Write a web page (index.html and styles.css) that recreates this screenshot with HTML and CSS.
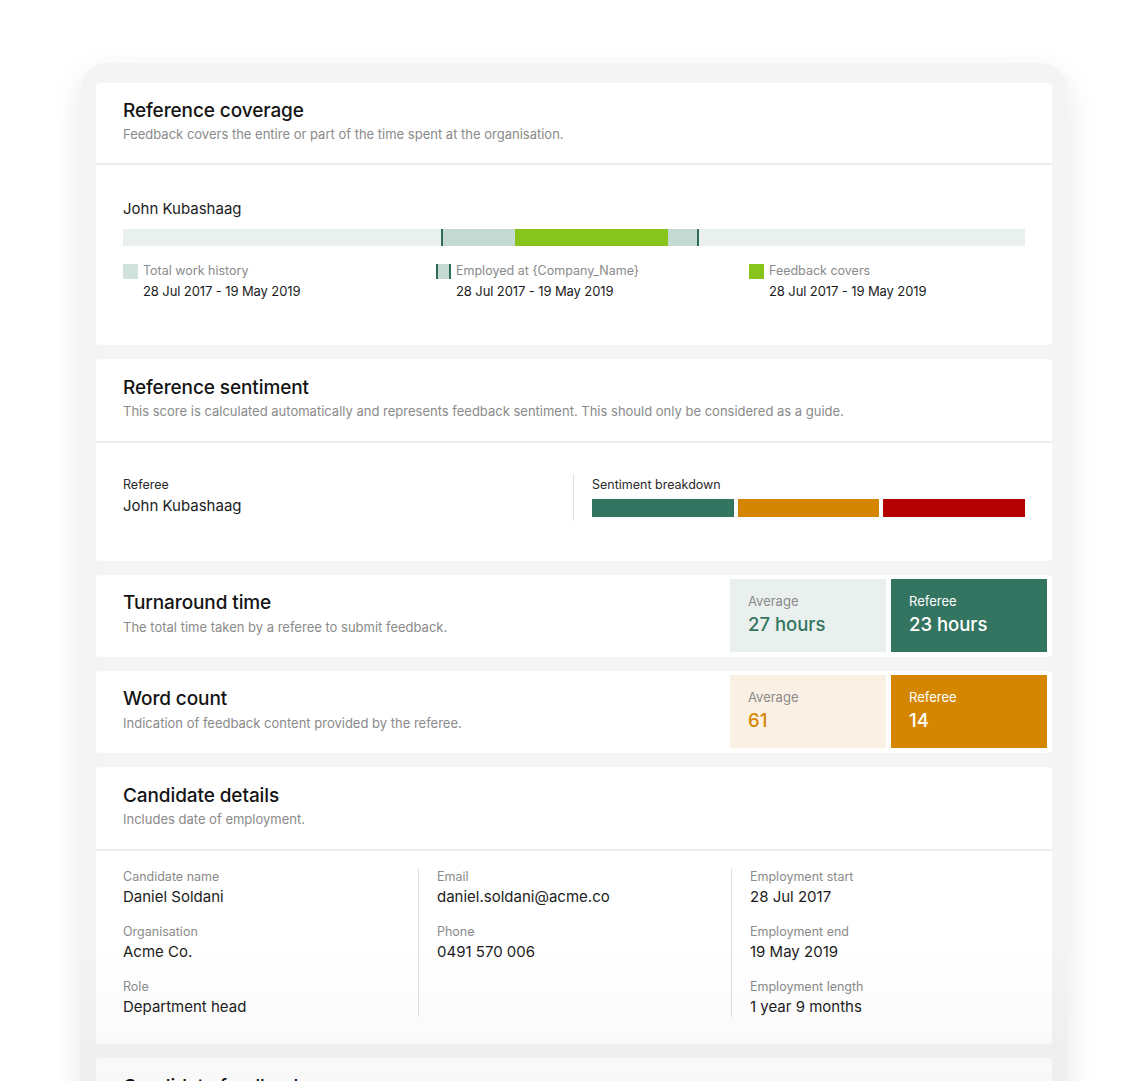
FILE: index.html
```html
<!DOCTYPE html>
<html lang="en">
<head>
<meta charset="utf-8">
<title>Reference report</title>
<link rel="stylesheet" href="styles.css">
</head>
<body>
<div class="frame">
  <section class="card">
    <div class="card-head card-head-first">
      <h2 class="title">Reference coverage</h2>
      <p class="subtitle">Feedback covers the entire or part of the time spent at the organisation.</p>
    </div>
    <div class="coverage-body">
      <div class="name">John Kubashaag</div>
      <div class="track">
        <span class="seg" style="width:35.29%"></span>
        <span class="seg tick"></span>
        <span class="seg employed" style="width:7.99%"></span>
        <span class="seg feedback" style="width:16.87%"></span>
        <span class="seg employed" style="width:3.22%"></span>
        <span class="seg tick"></span>
      </div>
      <div class="cols legend">
        <div class="col">
          <div class="legend-label"><span class="swatch sw-total"></span>Total work history</div>
          <div class="legend-date">28 Jul 2017 - 19 May 2019</div>
        </div>
        <div class="col">
          <div class="legend-label"><span class="swatch sw-employed"></span>Employed at {Company_Name}</div>
          <div class="legend-date">28 Jul 2017 - 19 May 2019</div>
        </div>
        <div class="col">
          <div class="legend-label"><span class="swatch sw-feedback"></span>Feedback covers</div>
          <div class="legend-date">28 Jul 2017 - 19 May 2019</div>
        </div>
      </div>
    </div>
  </section>

  <section class="card">
    <div class="card-head">
      <h2 class="title">Reference sentiment</h2>
      <p class="subtitle">This score is calculated automatically and represents feedback sentiment. This should only be considered as a guide.</p>
    </div>
    <div class="sentiment-body">
      <div class="sent-left">
        <div class="dark-label">Referee</div>
        <div class="name">John Kubashaag</div>
      </div>
      <div class="sent-right">
        <div class="dark-label">Sentiment breakdown</div>
        <div class="sent-bars">
          <span class="sbar s-pos"></span>
          <span class="sbar s-neu"></span>
          <span class="sbar s-neg"></span>
        </div>
      </div>
    </div>
  </section>

  <section class="card stat-card">
    <div class="stat-text">
      <h2 class="title">Turnaround time</h2>
      <p class="subtitle">The total time taken by a referee to submit feedback.</p>
    </div>
    <div class="stat-boxes">
      <div class="box box-green-light">
        <div class="box-label">Average</div>
        <div class="box-value">27 hours</div>
      </div>
      <div class="box box-green">
        <div class="box-label">Referee</div>
        <div class="box-value">23 hours</div>
      </div>
    </div>
  </section>

  <section class="card stat-card">
    <div class="stat-text">
      <h2 class="title">Word count</h2>
      <p class="subtitle">Indication of feedback content provided by the referee.</p>
    </div>
    <div class="stat-boxes">
      <div class="box box-orange-light">
        <div class="box-label">Average</div>
        <div class="box-value">61</div>
      </div>
      <div class="box box-orange">
        <div class="box-label">Referee</div>
        <div class="box-value">14</div>
      </div>
    </div>
  </section>

  <section class="card">
    <div class="card-head">
      <h2 class="title">Candidate details</h2>
      <p class="subtitle">Includes date of employment.</p>
    </div>
    <div class="cols details">
      <div class="col">
        <div class="field"><div class="field-label">Candidate name</div><div class="field-value">Daniel Soldani</div></div>
        <div class="field"><div class="field-label">Organisation</div><div class="field-value">Acme Co.</div></div>
        <div class="field"><div class="field-label">Role</div><div class="field-value">Department head</div></div>
      </div>
      <div class="col divided">
        <div class="field"><div class="field-label">Email</div><div class="field-value">daniel.soldani@acme.co</div></div>
        <div class="field"><div class="field-label">Phone</div><div class="field-value">0491 570 006</div></div>
      </div>
      <div class="col divided">
        <div class="field"><div class="field-label">Employment start</div><div class="field-value">28 Jul 2017</div></div>
        <div class="field"><div class="field-label">Employment end</div><div class="field-value">19 May 2019</div></div>
        <div class="field"><div class="field-label">Employment length</div><div class="field-value">1 year 9 months</div></div>
      </div>
    </div>
  </section>

  <section class="card">
    <div class="card-head">
      <h2 class="title">Candidate feedback</h2>
      <p class="subtitle">Responses provided by the referee.</p>
    </div>
  </section>

  <div class="fade"></div>
</div>
</body>
</html>
```

FILE: styles.css
```css
* { box-sizing: border-box; }

html, body {
  margin: 0;
  padding: 0;
  background: #ffffff;
  height: 1081px;
  overflow: hidden;
}

body {
  font-family: "Inter", "Liberation Sans", sans-serif;
  color: #1c1c1c;
}

.frame {
  position: relative;
  width: 988px;
  margin: 63px auto 0;
  padding: 20px 16px 40px;
  background: #f4f4f4;
  border-radius: 28px;
  box-shadow: 0 10px 32px rgba(0, 0, 0, 0.09);
  display: flex;
  flex-direction: column;
  gap: 14px;
}

.card {
  background: #ffffff;
  border-radius: 4px;
}

.card-head {
  padding: 17px 27px 20px;
  border-bottom: 2px solid #ececec;
}

.card-head-first {
  padding-top: 16px;
  padding-bottom: 19px;
}

.title {
  margin: 0;
  font-size: 19px;
  line-height: 24px;
  font-weight: 500;
  letter-spacing: -0.1px;
  color: #141414;
}

.subtitle {
  margin: 1px 0 0;
  font-size: 13px;
  line-height: 20px;
  color: #8a8a8a;
}

.name {
  font-size: 15px;
  line-height: 20px;
  color: #1c1c1c;
}

/* coverage */
.coverage-body {
  padding: 34px 27px 44px;
}

.track {
  display: flex;
  height: 17px;
  margin-top: 10px;
  background: #e9f0ee;
}

.seg { display: block; height: 100%; }
.seg.tick { width: 2px; background: #2f6c58; }
.seg.employed { background: #c5d9d3; }
.seg.feedback { background: #87c41c; }

.cols {
  display: grid;
  grid-template-columns: 277px 295px 293px;
  column-gap: 18px;
}

.cols .col + .col {
  padding-left: 18px;
}

.legend { margin-top: 17px; }

.legend-label {
  display: flex;
  align-items: center;
  font-size: 12.5px;
  line-height: 16px;
  color: #8a8a8a;
}

.swatch {
  display: inline-block;
  width: 15px;
  height: 15px;
  margin-right: 5px;
  flex: none;
}

.sw-total { background: #d1e2dc; }
.sw-employed { background: #c5d9d3; border-left: 2px solid #2f6c58; border-right: 2px solid #2f6c58; }
.sw-feedback { background: #87c41c; }

.legend-date {
  margin-top: 2px;
  padding-left: 20px;
  font-size: 13px;
  line-height: 20px;
  letter-spacing: -0.1px;
  color: #1c1c1c;
}

/* sentiment */
.sentiment-body {
  display: grid;
  grid-template-columns: 432px 1fr;
  column-gap: 18px;
  padding: 31px 27px 40px;
}

.sent-left { padding-top: 3px; }

.sent-right {
  border-left: 1px solid #e0e0e0;
  padding: 3px 0 4px 18px;
}

.dark-label {
  font-size: 12.5px;
  line-height: 16px;
  color: #2a2a2a;
}

.sent-left .name { margin-top: 3px; }

.sent-bars {
  display: flex;
  gap: 4px;
  margin-top: 6px;
  height: 18px;
}

.sbar { flex: 1; display: block; }
.s-pos { background: #337560; }
.s-neu { background: #d48600; }
.s-neg { background: #b30000; }

/* stat cards */
.stat-card {
  display: flex;
  align-items: stretch;
}

.stat-text {
  flex: 1;
  padding: 16px 27px 19px;
}

.stat-text .subtitle { margin-top: 2px; }

.stat-boxes {
  display: flex;
  gap: 5px;
  padding: 4px 5px 5px 0;
}

.box {
  width: 156px;
  padding: 14px 18px 16px;
}

.box-label {
  font-size: 13px;
  line-height: 16px;
}

.box-value {
  margin-top: 3px;
  font-size: 18.5px;
  line-height: 24px;
  font-weight: 500;
}

.box-green-light { background: #e9f0ee; }
.box-green-light .box-label { color: #8a8a8a; }
.box-green-light .box-value { color: #337560; }

.box-green { background: #337560; color: #ffffff; }

.box-orange-light { background: #fbf0e4; }
.box-orange-light .box-label { color: #8a8a8a; }
.box-orange-light .box-value { color: #d48600; }

.box-orange { background: #d48600; color: #ffffff; }

/* details */
.details {
  padding: 18px 27px 27px;
}

.details .col.divided {
  border-left: 1px solid #e0e0e0;
}

.field + .field { margin-top: 17px; }

.field-label {
  font-size: 12.5px;
  line-height: 16px;
  color: #8a8a8a;
}

.field-value {
  margin-top: 2px;
  font-size: 15px;
  line-height: 20px;
  color: #1c1c1c;
}

.fade {
  position: absolute;
  left: 0;
  right: 0;
  top: 880px;
  height: 220px;
  border-radius: 0 0 28px 28px;
  background: linear-gradient(to bottom, rgba(0, 0, 0, 0), rgba(0, 0, 0, 0.045));
  pointer-events: none;
}
```
